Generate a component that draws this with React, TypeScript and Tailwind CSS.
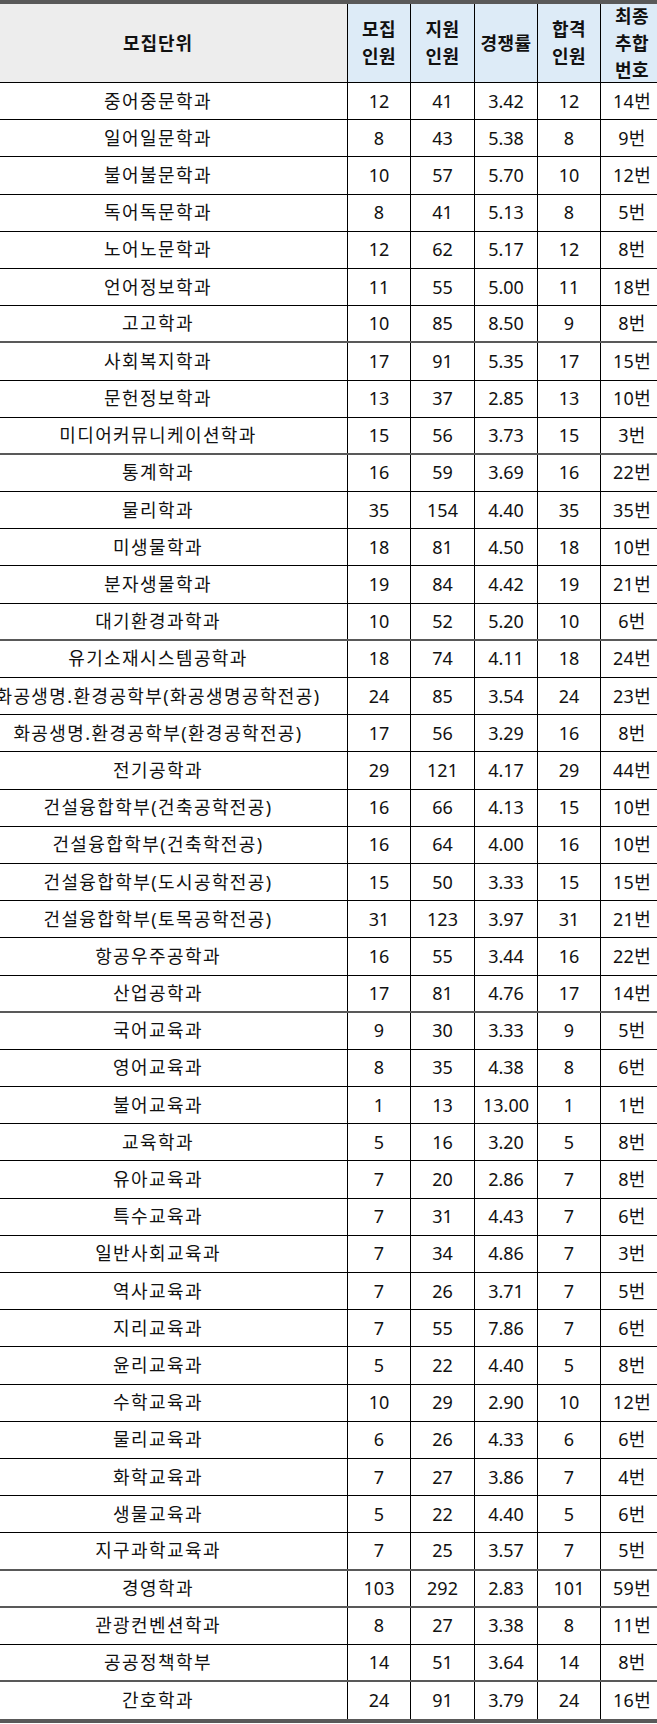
import React from "react";

type Row = [string, string, string, string, string, string, boolean?];

const rows: Row[] = [
  ["중어중문학과", "12", "41", "3.42", "12", "14번"],
  ["일어일문학과", "8", "43", "5.38", "8", "9번"],
  ["불어불문학과", "10", "57", "5.70", "10", "12번"],
  ["독어독문학과", "8", "41", "5.13", "8", "5번"],
  ["노어노문학과", "12", "62", "5.17", "12", "8번"],
  ["언어정보학과", "11", "55", "5.00", "11", "18번"],
  ["고고학과", "10", "85", "8.50", "9", "8번", true],
  ["사회복지학과", "17", "91", "5.35", "17", "15번"],
  ["문헌정보학과", "13", "37", "2.85", "13", "10번"],
  ["미디어커뮤니케이션학과", "15", "56", "3.73", "15", "3번", true],
  ["통계학과", "16", "59", "3.69", "16", "22번"],
  ["물리학과", "35", "154", "4.40", "35", "35번"],
  ["미생물학과", "18", "81", "4.50", "18", "10번"],
  ["분자생물학과", "19", "84", "4.42", "19", "21번"],
  ["대기환경과학과", "10", "52", "5.20", "10", "6번", true],
  ["유기소재시스템공학과", "18", "74", "4.11", "18", "24번"],
  ["화공생명.환경공학부(화공생명공학전공)", "24", "85", "3.54", "24", "23번"],
  ["화공생명.환경공학부(환경공학전공)", "17", "56", "3.29", "16", "8번"],
  ["전기공학과", "29", "121", "4.17", "29", "44번"],
  ["건설융합학부(건축공학전공)", "16", "66", "4.13", "15", "10번"],
  ["건설융합학부(건축학전공)", "16", "64", "4.00", "16", "10번"],
  ["건설융합학부(도시공학전공)", "15", "50", "3.33", "15", "15번"],
  ["건설융합학부(토목공학전공)", "31", "123", "3.97", "31", "21번"],
  ["항공우주공학과", "16", "55", "3.44", "16", "22번"],
  ["산업공학과", "17", "81", "4.76", "17", "14번", true],
  ["국어교육과", "9", "30", "3.33", "9", "5번"],
  ["영어교육과", "8", "35", "4.38", "8", "6번"],
  ["불어교육과", "1", "13", "13.00", "1", "1번"],
  ["교육학과", "5", "16", "3.20", "5", "8번"],
  ["유아교육과", "7", "20", "2.86", "7", "8번"],
  ["특수교육과", "7", "31", "4.43", "7", "6번"],
  ["일반사회교육과", "7", "34", "4.86", "7", "3번"],
  ["역사교육과", "7", "26", "3.71", "7", "5번"],
  ["지리교육과", "7", "55", "7.86", "7", "6번"],
  ["윤리교육과", "5", "22", "4.40", "5", "8번"],
  ["수학교육과", "10", "29", "2.90", "10", "12번"],
  ["물리교육과", "6", "26", "4.33", "6", "6번"],
  ["화학교육과", "7", "27", "3.86", "7", "4번"],
  ["생물교육과", "5", "22", "4.40", "5", "6번"],
  ["지구과학교육과", "7", "25", "3.57", "7", "5번", true],
  ["경영학과", "103", "292", "2.83", "101", "59번", true],
  ["관광컨벤션학과", "8", "27", "3.38", "8", "11번"],
  ["공공정책학부", "14", "51", "3.64", "14", "8번", true],
  ["간호학과", "24", "91", "3.79", "24", "16번"],
];

const font = {
  fontFamily: '"Noto Sans", "Noto Sans CJK KR", sans-serif',
};

function HeaderCell({ lines, w, last }: { lines: string[]; w: string; last?: boolean }) {
  return (
    <div
      className={`${w} flex-none h-full flex flex-col items-center justify-center bg-[#ddebf7] ${
        last ? "" : "border-r border-black"
      }`}
    >
      {lines.map((l) => (
        <div key={l} className="leading-[27px] whitespace-nowrap tracking-[0.5px]">
          {l}
        </div>
      ))}
    </div>
  );
}

export default function App() {
  return (
    <div className="w-[657px] overflow-hidden bg-white text-black" style={font}>
      <div className="ml-[-31px] w-[694px]">
        <div className="h-[4px] bg-[#595959]" />
        <div className="flex h-[79px] border-b border-black text-[18px] font-bold text-[#111]">
          <div className="w-[379px] flex-none h-full flex items-center justify-center bg-[#ededed] border-r border-black tracking-[1px]">
            모집단위
          </div>
          <HeaderCell lines={["모집", "인원"]} w="w-[63px]" />
          <HeaderCell lines={["지원", "인원"]} w="w-[64px]" />
          <HeaderCell lines={["경쟁률"]} w="w-[63px]" />
          <HeaderCell lines={["합격", "인원"]} w="w-[63px]" />
          <HeaderCell lines={["최종", "추합", "번호"]} w="w-[62px]" last />
        </div>
        {rows.map((r, i) => {
          const thick = r[6];
          const isLast = i === rows.length - 1;
          const border = isLast
            ? "border-b-[4px] border-[#595959]"
            : thick
            ? "border-b-2 border-[#595959]"
            : "border-b border-black";
          return (
            <div
              key={i}
              className={`flex ${isLast ? "h-[41.2px]" : "h-[37.2px]"} ${border} text-[18px] text-[#111]`}
            >
              <div className="w-[379px] flex-none flex items-center justify-center border-r border-black whitespace-nowrap tracking-[1.4px]">
                {r[0]}
              </div>
              <div className="w-[63px] flex-none flex items-center justify-center border-r border-black">
                {r[1]}
              </div>
              <div className="w-[64px] flex-none flex items-center justify-center border-r border-black">
                {r[2]}
              </div>
              <div className="w-[63px] flex-none flex items-center justify-center border-r border-black">
                {r[3]}
              </div>
              <div className="w-[63px] flex-none flex items-center justify-center border-r border-black">
                {r[4]}
              </div>
              <div className="w-[62px] flex-none flex items-center justify-center tracking-[0.3px]">
                {r[5]}
              </div>
            </div>
          );
        })}
      </div>
    </div>
  );
}
